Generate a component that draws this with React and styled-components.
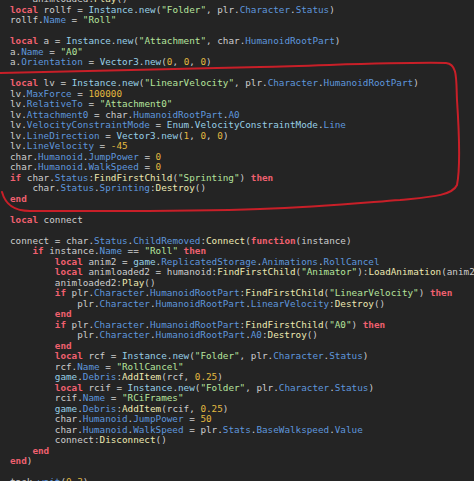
import React from 'react'
import styled, { createGlobalStyle } from 'styled-components'

const GlobalStyle = createGlobalStyle`
  html, body {
    margin: 0;
    padding: 0;
    background: #242424;
    overflow: hidden;
  }
`

const Screen = styled.div`
  position: relative;
  width: 474px;
  height: 481px;
  overflow: hidden;
  background: #242424;
`

const Code = styled.div`
  margin-top: -5.75px;
  padding-left: 10px;
  font-family: "DejaVu Sans Mono", "Liberation Mono", monospace;
  font-size: 9.3px;
  line-height: 10.5px;
  color: #cdcdcd;
`

const Line = styled.div`
  height: 10.5px;
  white-space: pre;
`

const COLORS = {
  plain: '#cdcdcd',
  kw: '#f0606f',
  str: '#b5e39c',
  num: '#e2b940',
  prop: '#5e96dc',
  builtin: '#97cfe6',
  method: '#ece8b2',
}

const Tok = styled.span`
  color: ${p => COLORS[p.$kind]};
  font-weight: ${p => (p.$kind === 'kw' ? 'bold' : 'normal')};
`

const Scribble = styled.svg`
  position: absolute;
  left: 0;
  top: 0;
  pointer-events: none;
`

const KEYWORDS = new Set(['local', 'if', 'then', 'end', 'function', 'return', 'else', 'not', 'and', 'or'])
const BUILTINS = new Set(['Instance', 'Vector3', 'Enum'])

const LINES = [
  '    animloaded:Play()',
  'local rollf = Instance.new("Folder", plr.Character.Status)',
  'rollf.Name = "Roll"',
  '',
  'local a = Instance.new("Attachment", char.HumanoidRootPart)',
  'a.Name = "A0"',
  'a.Orientation = Vector3.new(0, 0, 0)',
  '',
  'local lv = Instance.new("LinearVelocity", plr.Character.HumanoidRootPart)',
  'lv.MaxForce = 100000',
  'lv.RelativeTo = "Attachment0"',
  'lv.Attachment0 = char.HumanoidRootPart.A0',
  'lv.VelocityConstraintMode = Enum.VelocityConstraintMode.Line',
  'lv.LineDirection = Vector3.new(1, 0, 0)',
  'lv.LineVelocity = -45',
  'char.Humanoid.JumpPower = 0',
  'char.Humanoid.WalkSpeed = 0',
  'if char.Status:FindFirstChild("Sprinting") then',
  '    char.Status.Sprinting:Destroy()',
  'end',
  '',
  'local connect',
  '',
  'connect = char.Status.ChildRemoved:Connect(function(instance)',
  '    if instance.Name == "Roll" then',
  '        local anim2 = game.ReplicatedStorage.Animations.RollCancel',
  '        local animloaded2 = humanoid:FindFirstChild("Animator"):LoadAnimation(anim2)',
  '        animloaded2:Play()',
  '        if plr.Character.HumanoidRootPart:FindFirstChild("LinearVelocity") then',
  '            plr.Character.HumanoidRootPart.LinearVelocity:Destroy()',
  '        end',
  '        if plr.Character.HumanoidRootPart:FindFirstChild("A0") then',
  '            plr.Character.HumanoidRootPart.A0:Destroy()',
  '        end',
  '        local rcf = Instance.new("Folder", plr.Character.Status)',
  '        rcf.Name = "RollCancel"',
  '        game.Debris:AddItem(rcf, 0.25)',
  '        local rcif = Instance.new("Folder", plr.Character.Status)',
  '        rcif.Name = "RCiFrames"',
  '        game.Debris:AddItem(rcif, 0.25)',
  '        char.Humanoid.JumpPower = 50',
  '        char.Humanoid.WalkSpeed = plr.Stats.BaseWalkspeed.Value',
  '        connect:Disconnect()',
  '    end',
  'end)',
  '',
  'task.wait(0.3)',
]

// tiny lua highlighter, good enough for the studio colours
function tokenize(line) {
  const re = /(\s+)|("[^"]*")|(-?\d+(?:\.\d+)?)|([A-Za-z_]\w*)|(==|.)/g
  const out = []
  let prev = ''
  let builtinChain = false
  let m
  while ((m = re.exec(line))) {
    const [text, space, str, num, ident] = m
    if (space) {
      out.push({ text, kind: 'plain' })
      continue
    }
    let kind = 'plain'
    if (str) kind = 'str'
    else if (num) kind = 'num'
    else if (ident) {
      if (KEYWORDS.has(ident)) kind = 'kw'
      else if (prev === ':') kind = 'method'
      else if (prev === '.') kind = builtinChain && ident !== 'Line' ? 'builtin' : 'prop'
      else if (BUILTINS.has(ident)) {
        kind = 'builtin'
        builtinChain = true
      } else if (ident === 'game') kind = 'builtin'
    }
    if (!ident && text !== '.') builtinChain = false
    prev = text
    out.push({ text, kind })
  }
  return out
}

export default function App() {
  return (
    <>
      <GlobalStyle />
      <Screen>
        <Code>
          {LINES.map((line, i) => (
            <Line key={i}>
              {tokenize(line).map((t, j) => (
                <Tok key={j} $kind={t.kind}>{t.text}</Tok>
              ))}
            </Line>
          ))}
        </Code>
        <Scribble width="474" height="481" viewBox="0 0 474 481">
          <path
            d="M -5 73 C 80 71, 180 69, 260 67 C 340 65, 400 62, 446 63 C 458 64, 456 80, 457 100 C 459 130, 461 165, 457 185 C 452 196, 430 197, 400 200 C 360 203, 320 207, 260 209 C 180 212, 90 211, 30 211 C 12 211, 5 203, 2 192"
            fill="none"
            stroke="#c81f28"
            strokeWidth="2"
            strokeLinecap="round"
            strokeLinejoin="round"
          />
        </Scribble>
      </Screen>
    </>
  )
}
